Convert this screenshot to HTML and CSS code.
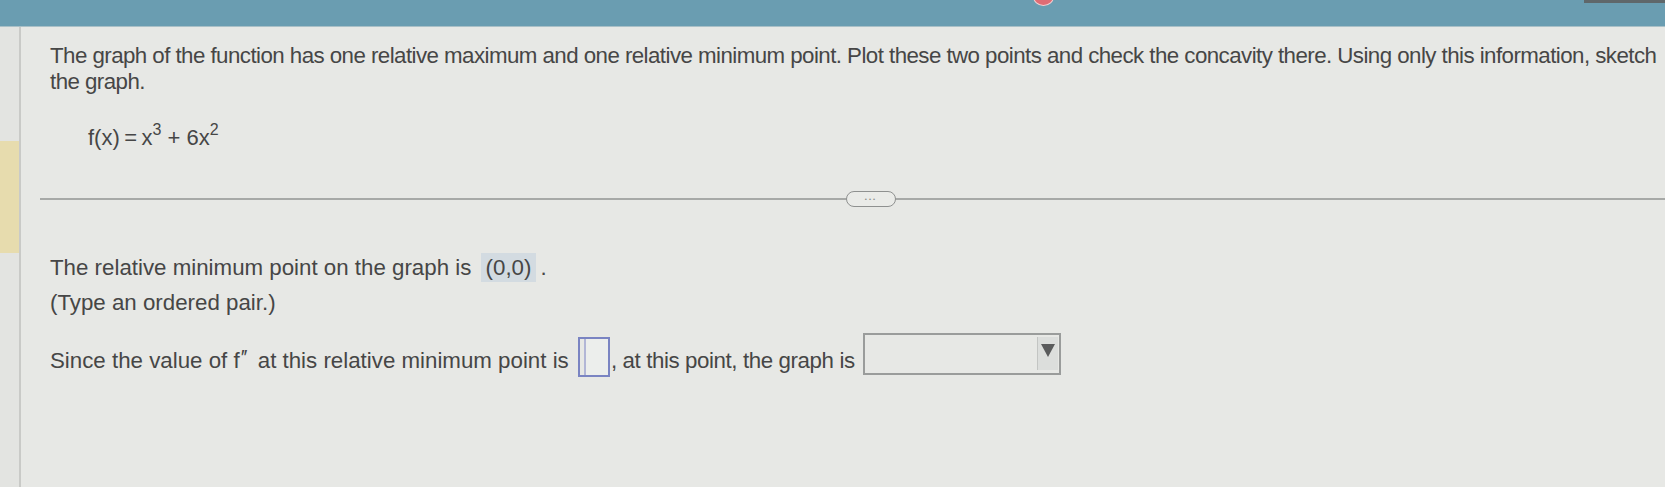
FILE: index.html
```html
<!DOCTYPE html>
<html>
<head>
	<meta charset="UTF-8">
	<title>Concavidad</title>
	<link rel="stylesheet" href="styles.css">
</head>
<body>
	<div class="barra">
		<span class="punto"></span>
		<span class="pestana"></span>
	</div>

	<div class="pagina">
		<div class="lateral">
			<div class="marca"></div>
		</div>

		<div class="contenido">
			<p class="enunciado">The graph of the function has one relative maximum and one relative minimum point. Plot these two points and check the concavity there. Using only this information, sketch the graph.</p>

			<p class="funcion">f(x)&thinsp;=&thinsp;x<sup>3</sup> + 6x<sup>2</sup></p>

			<div class="separador">
				<span class="mas">&bull;&bull;&bull;</span>
			</div>

			<p class="respuesta">The relative minimum point on the graph is <span class="resuelto">(0,0)</span>.</p>
			<p class="nota">(Type an ordered pair.)</p>

			<p class="pregunta">Since the value of f<span class="prima">&prime;&prime;</span> at this relative minimum point is <span class="caja"></span><span class="resto">, at this point, the graph is</span> <span class="lista"><span class="flecha"></span></span></p>
		</div>
	</div>
</body>
</html>
```

FILE: styles.css
```css
body{
	margin: 0;
	background: #e7e8e5;
	font-family: "Liberation Sans", Arial, sans-serif;
	color: #464646;
	overflow: hidden;
}

.barra{
	position: relative;
	height: 26px;
	background: #6a9db1;
	border-bottom: 1px solid #a9c0c7;
}

.punto{
	position: absolute;
	left: 1033px;
	top: -13px;
	width: 19px;
	height: 17px;
	border-radius: 50%;
	background: #e06c74;
	border: 1px solid #f3d0d2;
}

.pestana{
	position: absolute;
	left: 1584px;
	top: 0;
	width: 81px;
	height: 3px;
	background: #5f676a;
}

.pagina{
	display: flex;
	height: 460px;
}

.lateral{
	flex-shrink: 0;
	width: 19px;
	background: #e3e4e1;
	border-right: 2px solid #c9cac7;
	padding-top: 114px;
}

.marca{
	height: 112px;
	background: #e7dcae;
}

.contenido{
	flex: 1;
	min-width: 0;
	overflow: hidden;
	padding-left: 29px;
	padding-top: 16px;
}

p{
	margin: 0;
	font-size: 22.3px;
	line-height: 26px;
}

.enunciado{
	letter-spacing: -0.55px;
}

.funcion{
	margin-top: 30px;
	margin-left: 38px;
	font-size: 22px;
}

.funcion sup{
	font-size: 16px;
	vertical-align: 10px;
	line-height: 0;
}

.separador{
	position: relative;
	margin: 47px 0 0 -10px;
	border-top: 2px solid #a7a9a7;
}

.mas{
	position: absolute;
	left: 806px;
	top: -9px;
	width: 48px;
	height: 14px;
	border: 1.5px solid #8f9190;
	border-radius: 8px;
	background: #eaebe8;
	color: #8d8f8d;
	font-size: 6px;
	line-height: 14px;
	text-align: center;
	letter-spacing: 2px;
}

.respuesta{
	margin-top: 53px;
	line-height: 29px;
}

.resuelto{
	display: inline-block;
	background: #d3dbe1;
	padding: 0 5px;
	margin-left: 3px;
	margin-right: 4px;
	line-height: 29px;
}

.nota{
	margin-top: 8px;
}

.pregunta{
	margin-top: 17px;
	line-height: 42px;
}

.prima{
	font-size: 21px;
	vertical-align: 4px;
	margin-left: 1px;
	margin-right: 5px;
	letter-spacing: -1px;
}

.caja{
	display: inline-block;
	width: 28px;
	height: 36px;
	border: 2px solid #7a84c2;
	vertical-align: -9px;
	margin: 0 1px 0 3px;
	background: #eceeec;
	box-shadow: inset 4px 0 0 #e7e8e5, inset 6px 0 0 #b2b6d6;
}

.resto{
	letter-spacing: -0.4px;
}

.lista{
	display: inline-block;
	position: relative;
	width: 194px;
	height: 38px;
	border: 2px solid #9a9c9b;
	vertical-align: -7px;
	margin-left: 2px;
}

.flecha{
	position: absolute;
	right: 1px;
	top: 2px;
	width: 20px;
	height: 33px;
	background: #dcdedc;
	border-left: 1px solid #c3c5c3;
}

.flecha::after{
	content: "";
	position: absolute;
	left: 3px;
	top: 7px;
	border-left: 7px solid transparent;
	border-right: 7px solid transparent;
	border-top: 13px solid #5a5b5c;
}
```
